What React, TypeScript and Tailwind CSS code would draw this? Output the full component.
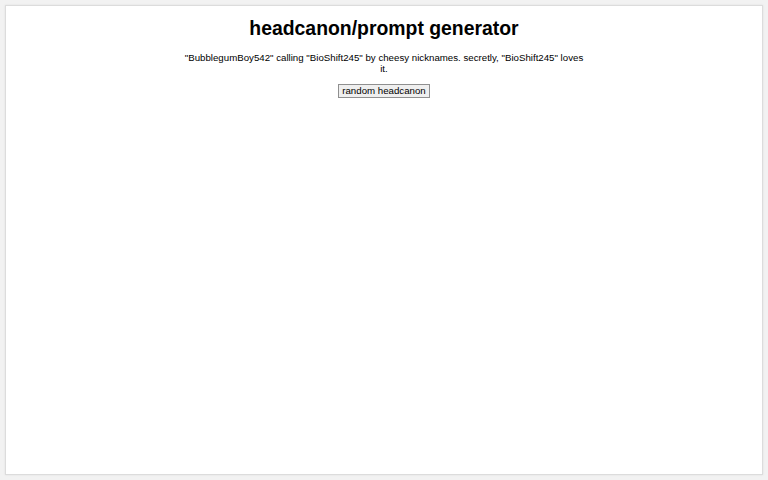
const headcanon =
  '"BubblegumBoy542" calling "BioShift245" by cheesy nicknames. secretly, "BioShift245" loves it.';

export default function App() {
  return (
    <div className="h-[480px] bg-[#f2f2f2] p-[5px] font-['Liberation_Sans',Arial,sans-serif] text-black">
      <div className="flex h-[470px] flex-col items-center border border-[#dcdcdc] bg-white shadow-[0_0_2px_rgba(0,0,0,0.08)]">
        <h1 className="mt-[10px] text-[19.4px] font-bold leading-[24px]">headcanon/prompt generator</h1>
        <p className="mt-[12px] w-[402px] text-center text-[9.7px] leading-[11px]">{headcanon}</p>
        <button className="mt-[10px] border border-[#8f8f8f] bg-[#efefef] px-[3px] text-[9.7px] leading-[12px]">
          random headcanon
        </button>
      </div>
    </div>
  );
}
